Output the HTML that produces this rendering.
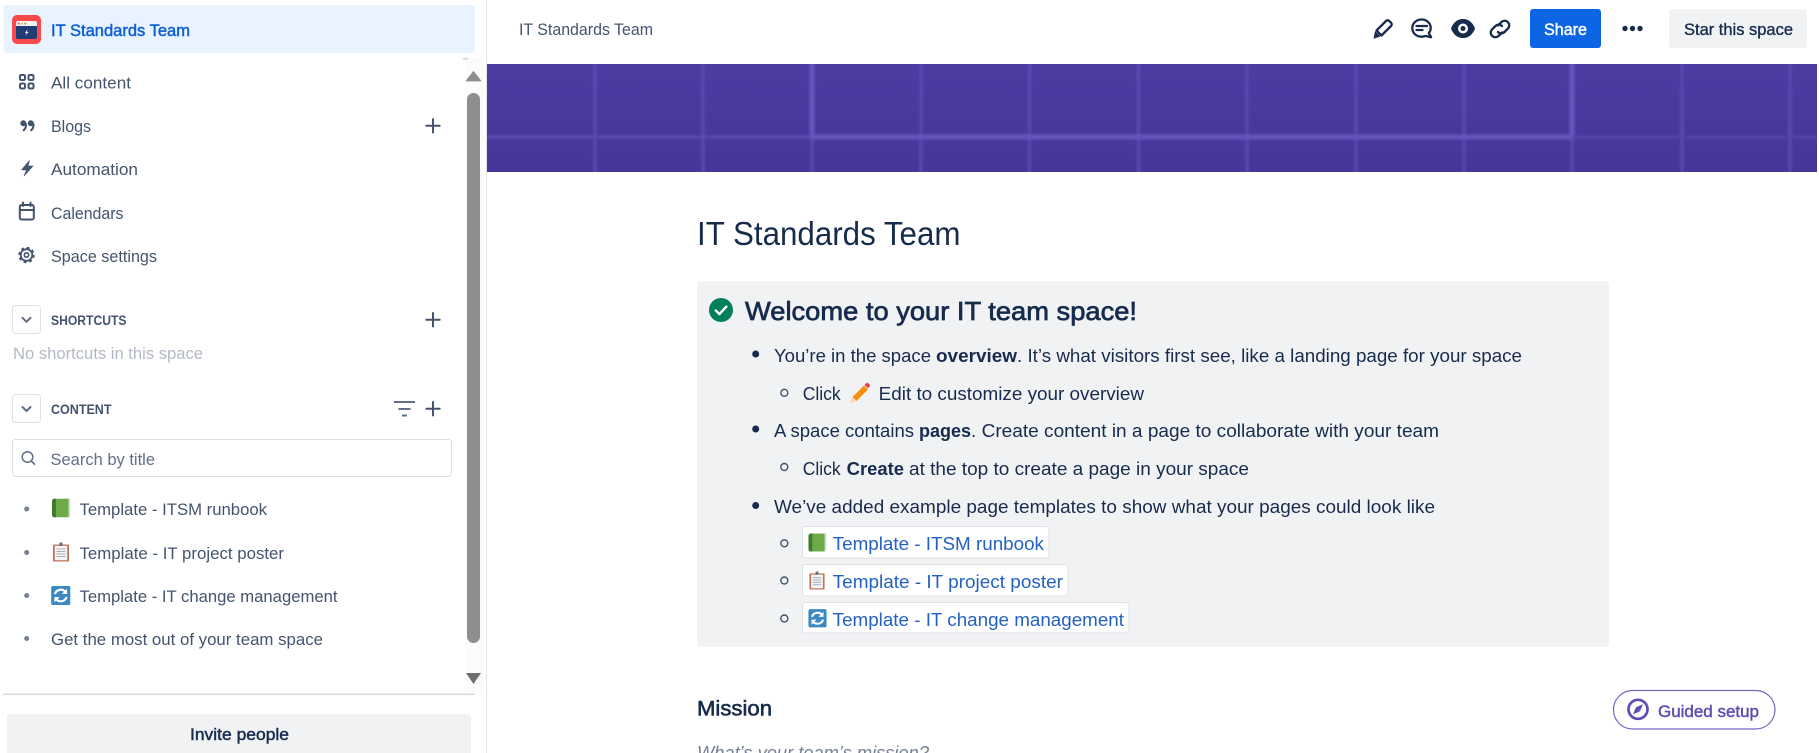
<!DOCTYPE html>
<html lang="en">
<head>
<meta charset="utf-8">
<title>IT Standards Team</title>
<style>
html,body{margin:0;padding:0;background:#fff;width:1819px;height:753px;overflow:hidden}
svg{display:block;position:absolute;left:0;top:0}
text{font-family:"Liberation Sans","DejaVu Sans",sans-serif;white-space:pre}
.s{font-size:16.2px;fill:#44546f}
.p{font-size:18.3px;fill:#172b4d}
.b{font-weight:700}
.l{font-size:18.3px;fill:#2361c4}
.ic{fill:none;stroke:#44546f;stroke-width:2;stroke-linecap:round;stroke-linejoin:round}
.top{fill:none;stroke:#172b4d;stroke-width:2.3;stroke-linecap:round;stroke-linejoin:round}
</style>
</head>
<body>
<svg xmlns="http://www.w3.org/2000/svg" width="1819" height="753" viewBox="0 0 1819 753">
<defs>
<linearGradient id="bn" x1="0" y1="0" x2="0" y2="1"><stop offset="0" stop-color="#4c3ca1"/><stop offset="1" stop-color="#473699"/></linearGradient>
<filter id="bl" x="-20%" y="-20%" width="140%" height="140%"><feGaussianBlur stdDeviation="1.3"/></filter>
<symbol id="book" viewBox="0 0 20 20">
<path d="M3 0.5H19.5V17.5L18 19.5H3C1.5 19.5 0.5 18.5 0.5 17V3C0.5 1.500 1.500 .5 3 .5Z" fill="#d9ddd5"/>
<path d="M2.500 0.500H17.500V19.500H2.500Z" fill="#6cab47"/>
<path d="M0.500 3C0.500 1.500 1.500 0.500 3 0.500H4.500V19.500H3C1.500 19.500 0.500 18.500 0.500 17Z" fill="#3e7b2d"/>
</symbol>
<symbol id="clip" viewBox="0 0 20 20">
<rect x="2" y="2.500" width="16" height="17" rx="1" fill="#c4705b"/>
<rect x="3.800" y="3.800" width="12.400" height="14.400" fill="#f4f6f7"/>
<rect x="8.500" y="0.500" width="3" height="3.500" fill="#68717a"/>
<path d="M5.500 7H14.500M5.500 9.500H14.500M5.500 12H14.500M5.500 14.500H14.500" stroke="#a5adb5" stroke-width="1"/>
</symbol>
<symbol id="sync" viewBox="0 0 20 20">
<rect x="0.200" y="0.200" width="19.600" height="19.600" rx="2" fill="#3b88c3"/>
<path d="M4 8.500A6.300 6.300 0 0 1 15 6.500" fill="none" stroke="#fff" stroke-width="2.200"/>
<path d="M16.500 3V8.500H11Z" fill="#fff"/>
<path d="M16 11.500A6.300 6.300 0 0 1 5 13.500" fill="none" stroke="#fff" stroke-width="2.200"/>
<path d="M3.500 17V11.500H9Z" fill="#fff"/>
</symbol>
</defs>

<!-- sidebar -->
<rect x="465" y="58" width="18" height="636" fill="#fbfbfb"/>
<rect x="463" y="58" width="5" height="1.500" fill="#d5d5d5"/>
<rect x="486" y="0" width="1" height="753" fill="#e4e6ea"/>
<rect x="3.500" y="5" width="471.500" height="48" rx="4" fill="#e9f2ff"/>
<rect x="12" y="15" width="29" height="29" rx="5" fill="#f8494b"/>
<rect x="16" y="21" width="21" height="18" rx="2" fill="#1f3d72"/>
<path d="M16 26V23a2 2 0 0 1 2-2H35a2 2 0 0 1 2 2V26Z" fill="#f1f1f1"/>
<circle cx="18.800" cy="23.600" r="1" fill="#ea5a4f"/><circle cx="22" cy="23.600" r="1" fill="#e6b93d"/><circle cx="25.200" cy="23.600" r="1" fill="#6fb35c"/>
<path d="M27.500 29.500L25 33H26.500L25.500 35.500L28.500 32H27Z" fill="#fff"/>
<text x="51" y="36" font-size="16.2" fill="#0c5fd4" stroke="#0c5fd4" stroke-width="0.45" textLength="139" lengthAdjust="spacingAndGlyphs">IT Standards Team</text>

<!-- nav icons -->
<g class="ic">
<rect x="20" y="75" width="5" height="5" rx="1.300"/><rect x="28.500" y="75" width="5" height="5" rx="1.300"/>
<rect x="20" y="83.500" width="5" height="5" rx="1.300"/><rect x="28.500" y="83.500" width="5" height="5" rx="1.300"/>
<path d="M26 123.500V125c0 2.500-1.200 4.500-3 5.800" stroke-linecap="butt"/><path d="M33.500 123.500V125c0 2.500-1.200 4.500-3 5.800" stroke-linecap="butt"/>
<rect x="19.800" y="205" width="14" height="14.500" rx="1.800"/><path d="M20 210H34M23 202.500V206M30.500 202.500V206"/>
<circle cx="26.500" cy="255" r="2.200" stroke-width="1.600"/>
<circle cx="26.500" cy="255" r="5.800" stroke-width="1.800"/>
</g>
<circle cx="23.300" cy="123.200" r="3" fill="#44546f"/><circle cx="30.800" cy="123.200" r="3" fill="#44546f"/>
<path d="M29.500 160.500L21.500 170H26.500L24 176L33 166H28Z" fill="#44546f" stroke="#44546f" stroke-width="0.6" stroke-linejoin="round"/>
<circle cx="26.500" cy="255" r="7.300" fill="none" stroke="#44546f" stroke-width="1.800" stroke-dasharray="2.800 2.930"/>

<text class="s" x="51" y="88.500" textLength="80" lengthAdjust="spacingAndGlyphs">All content</text>
<text class="s" x="51" y="132" textLength="40" lengthAdjust="spacingAndGlyphs">Blogs</text>
<text class="s" x="51" y="175" textLength="87" lengthAdjust="spacingAndGlyphs">Automation</text>
<text class="s" x="51" y="219" textLength="72.500" lengthAdjust="spacingAndGlyphs">Calendars</text>
<text class="s" x="51" y="262" textLength="106" lengthAdjust="spacingAndGlyphs">Space settings</text>

<g fill="none" stroke="#44546f" stroke-width="2" stroke-linecap="round">
<path d="M433 119V132.500M426.300 125.700H439.700"/>
<path d="M433 313V326.500M426.300 319.700H439.700"/>
<path d="M433 402V415.500M426.300 408.700H439.700"/>
</g>

<!-- shortcuts -->
<rect x="12.500" y="305.500" width="28" height="28" rx="3" fill="#fff" stroke="#dfe1e6"/>
<path d="M22.500 317.800l4 4 4-4" fill="none" stroke="#626f86" stroke-width="2" stroke-linecap="round" stroke-linejoin="round"/>
<text x="51" y="325" font-size="13.500" font-weight="700" fill="#44546f" textLength="75.500" lengthAdjust="spacingAndGlyphs">SHORTCUTS</text>
<text x="13" y="359" font-size="16.200" fill="#b3b9c4" textLength="190" lengthAdjust="spacingAndGlyphs">No shortcuts in this space</text>

<!-- content -->
<rect x="12.500" y="394.500" width="28" height="28" rx="3" fill="#fff" stroke="#dfe1e6"/>
<path d="M22.500 407l4 4 4-4" fill="none" stroke="#626f86" stroke-width="2" stroke-linecap="round" stroke-linejoin="round"/>
<text x="51" y="414" font-size="13.500" font-weight="700" fill="#44546f" textLength="60.500" lengthAdjust="spacingAndGlyphs">CONTENT</text>
<path d="M394 402H415M398.500 409H410.500M402 415.500H407" fill="none" stroke="#626f86" stroke-width="2"/>
<rect x="12.500" y="439.500" width="439" height="37" rx="3" fill="#fff" stroke="#dcdfe4"/>
<circle cx="27.500" cy="457" r="5.300" fill="none" stroke="#626f86" stroke-width="1.500"/>
<path d="M31.500 461.200L34.500 464.200" stroke="#626f86" stroke-width="1.600" stroke-linecap="round"/>
<text x="50.500" y="465" font-size="16.200" fill="#626f86" textLength="104.500" lengthAdjust="spacingAndGlyphs">Search by title</text>

<g fill="#758195">
<circle cx="26.700" cy="509" r="2.500"/><circle cx="26.700" cy="552.500" r="2.500"/><circle cx="26.700" cy="595.500" r="2.500"/><circle cx="26.700" cy="638.500" r="2.500"/>
</g>
<use href="#book" x="51.500" y="498" width="19.500" height="20"/>
<use href="#clip" x="51" y="542" width="20" height="20"/>
<use href="#sync" x="51" y="585.500" width="19.500" height="20"/>
<text class="s" x="79.500" y="515" textLength="187.500" lengthAdjust="spacingAndGlyphs">Template - ITSM runbook</text>
<text class="s" x="79.500" y="559" textLength="204.500" lengthAdjust="spacingAndGlyphs">Template - IT project poster</text>
<text class="s" x="79.500" y="602" textLength="258" lengthAdjust="spacingAndGlyphs">Template - IT change management</text>
<text class="s" x="51" y="645" textLength="272" lengthAdjust="spacingAndGlyphs">Get the most out of your team space</text>

<!-- scrollbar -->
<path d="M473.500 71.500L481 81H466Z" fill="#8f8f8f" stroke="#8f8f8f" stroke-width="0.8" stroke-linejoin="round"/>
<rect x="467" y="93" width="13" height="550" rx="6.500" fill="#8e8e8e"/>
<path d="M466 673H481L473.500 684Z" fill="#6e6e6e"/>

<rect x="3" y="693.500" width="472" height="1.600" fill="#d8dadf"/>
<path d="M10 714H468a3 3 0 0 1 3 3V753H7V717a3 3 0 0 1 3-3Z" fill="#f1f2f4"/>
<text x="190" y="740" font-size="16.200" fill="#172b4d" stroke="#172b4d" stroke-width="0.45" textLength="99" lengthAdjust="spacingAndGlyphs">Invite people</text>

<!-- top bar -->
<text class="s" x="519" y="35" textLength="134" lengthAdjust="spacingAndGlyphs">IT Standards Team</text>
<g class="top">
<path d="M1376.500 30.500L1386 21a2.300 2.300 0 0 1 3.300 0L1391 22.700a2.300 2.300 0 0 1 0 3.300L1381.500 35.500Z"/>
<path d="M1421.500 19.500c5.200 0 9.200 3.700 9.200 8.400c0 2-.7 3.800-1.900 5.200l2.300 4.100l-5.400-1.300c-1.300.5-2.700.8-4.200.8c-5.200 0-9.200-3.800-9.200-8.600s4-8.600 9.200-8.600Z"/>
<path d="M1416.500 26H1427M1416.500 30H1422.500"/>
<path d="M1498 25.500l3.500-3.500a4.600 4.600 0 0 1 6.500 6.500l-3.500 3.500a4.600 4.600 0 0 1-6.500 0"/>
<path d="M1502 32.500l-3.500 3.500a4.600 4.600 0 0 1-6.500-6.500l3.500-3.500a4.600 4.600 0 0 1 6.500 0"/>
</g>
<path d="M1375 31L1380.500 36.500L1373.500 38.800Z" fill="#172b4d"/>
<path d="M1451 28.500C1453 23 1457 19 1463 19S1473 23 1475 28.500C1473 34 1469 38 1463 38S1453 34 1451 28.500Z" fill="#172b4d"/>
<circle cx="1463" cy="28.500" r="5" fill="#fff"/><circle cx="1463" cy="28.500" r="2.500" fill="#172b4d"/>

<rect x="1530" y="9" width="71" height="39" rx="3" fill="#0c66e4"/>
<text x="1544" y="35" font-size="16.200" fill="#fff" stroke="#fff" stroke-width="0.45" textLength="43" lengthAdjust="spacingAndGlyphs">Share</text>
<g fill="#172b4d"><circle cx="1625" cy="28.500" r="2.700"/><circle cx="1632.500" cy="28.500" r="2.700"/><circle cx="1640" cy="28.500" r="2.700"/></g>
<rect x="1669" y="9" width="138" height="39" rx="3" fill="#f1f2f4"/>
<text x="1684" y="35" font-size="16.200" fill="#172b4d" stroke="#172b4d" stroke-width="0.35" textLength="109" lengthAdjust="spacingAndGlyphs">Star this space</text>

<!-- banner -->
<svg x="487" y="64" width="1330" height="108" viewBox="487 64 1330 108">
<rect x="487" y="64" width="1330" height="108" fill="url(#bn)"/>
<g filter="url(#bl)">
<g fill="#5a4cb2">
<rect x="593.500" y="60" width="3" height="116"/><rect x="701.500" y="60" width="3" height="116"/>
<rect x="919.500" y="60" width="3" height="116"/><rect x="1028" y="60" width="3" height="116"/>
<rect x="1137" y="60" width="3" height="116"/><rect x="1245.500" y="60" width="3" height="116"/>
<rect x="1354.500" y="60" width="3" height="116"/><rect x="1462.500" y="60" width="3" height="116"/>
<rect x="1680.500" y="60" width="3" height="116"/><rect x="1788.500" y="60" width="3" height="116"/>
</g>
<rect x="809.500" y="60" width="5" height="78" fill="#6659c0"/>
<rect x="810.500" y="136" width="3" height="40" fill="#5a4cb2"/>
<rect x="1569.500" y="60" width="5" height="78" fill="#6659c0"/>
<rect x="1570.500" y="136" width="3" height="40" fill="#5a4cb2"/>
<rect x="483" y="135.500" width="330" height="3" fill="#5a4cb2"/>
<rect x="810" y="134.500" width="764" height="5" fill="#6456bc"/>
<rect x="1572" y="136" width="250" height="2.500" fill="#5546ad"/>
</g>
</svg>

<!-- page -->
<text x="697" y="245" font-size="33" fill="#172b4d" textLength="263.500" lengthAdjust="spacingAndGlyphs">IT Standards Team</text>
<rect x="697" y="281" width="912" height="366" rx="3" fill="#f1f2f4"/>
<circle cx="721" cy="310" r="12" fill="#00805a"/>
<path d="M715.800 310.500l3.600 3.600l7-7.500" fill="none" stroke="#fff" stroke-width="2.400" stroke-linecap="round" stroke-linejoin="round"/>
<text x="745" y="320" font-size="26" fill="#172b4d" stroke="#172b4d" stroke-width="0.7" textLength="392" lengthAdjust="spacingAndGlyphs">Welcome to your IT team space!</text>

<g fill="#172b4d"><circle cx="755.700" cy="354" r="3.500"/><circle cx="755.700" cy="429" r="3.500"/><circle cx="755.700" cy="505.500" r="3.500"/></g>
<g fill="none" stroke="#44546f" stroke-width="1.400">
<circle cx="784.300" cy="392.800" r="3.500"/><circle cx="784.300" cy="467" r="3.500"/>
<circle cx="784.300" cy="543.300" r="3.500"/><circle cx="784.300" cy="580.500" r="3.500"/><circle cx="784.300" cy="618.500" r="3.500"/>
</g>

<text class="p" x="774" y="362" textLength="157" lengthAdjust="spacingAndGlyphs">You’re in the space</text>
<text class="p b" x="936" y="362" textLength="81" lengthAdjust="spacingAndGlyphs">overview</text>
<text class="p" x="1017" y="362" textLength="505" lengthAdjust="spacingAndGlyphs">. It’s what visitors first see, like a landing page for your space</text>

<text class="p" x="802.700" y="400" textLength="38" lengthAdjust="spacingAndGlyphs">Click</text>
<g>
<path d="M852.500 397L864 385.500L868 389.500L856.500 401Z" fill="#f4900c"/>
<path d="M864.500 385l1.800-1.800a1.500 1.500 0 0 1 2 0l1.300 1.300a1.500 1.500 0 0 1 0 2l-1.800 1.800Z" fill="#ea3a5e"/>
<path d="M852.500 397L856.500 401L849.500 403.500Z" fill="#fbd5a5"/>
</g>
<text class="p" x="878.700" y="400" textLength="265.300" lengthAdjust="spacingAndGlyphs">Edit to customize your overview</text>

<text class="p" x="774" y="437" textLength="140" lengthAdjust="spacingAndGlyphs">A space contains</text>
<text class="p b" x="919" y="437" textLength="52" lengthAdjust="spacingAndGlyphs">pages</text>
<text class="p" x="971" y="437" textLength="468" lengthAdjust="spacingAndGlyphs">. Create content in a page to collaborate with your team</text>

<text class="p" x="802.700" y="475" textLength="38" lengthAdjust="spacingAndGlyphs">Click</text>
<text class="p b" x="846.700" y="475" textLength="57.300" lengthAdjust="spacingAndGlyphs">Create</text>
<text class="p" x="909" y="475" textLength="340" lengthAdjust="spacingAndGlyphs">at the top to create a page in your space</text>

<text class="p" x="774" y="513" textLength="661" lengthAdjust="spacingAndGlyphs">We’ve added example page templates to show what your pages could look like</text>

<g fill="#fff" stroke="#dfe1e6">
<rect x="802.500" y="526.500" width="246.500" height="31.500" rx="3"/>
<rect x="802.500" y="564.500" width="265.500" height="31.500" rx="3"/>
<rect x="802.500" y="602.500" width="326.500" height="30.500" rx="3"/>
</g>
<use href="#book" x="808" y="533" width="19" height="19"/>
<use href="#clip" x="807.500" y="571" width="19" height="19"/>
<use href="#sync" x="808" y="609" width="19" height="18.500"/>
<text class="l" x="832.700" y="550" textLength="211.300" lengthAdjust="spacingAndGlyphs">Template - ITSM runbook</text>
<text class="l" x="832.700" y="588" textLength="230.300" lengthAdjust="spacingAndGlyphs">Template - IT project poster</text>
<text class="l" x="832.700" y="626" textLength="291.300" lengthAdjust="spacingAndGlyphs">Template - IT change management</text>

<text x="697" y="715.500" font-size="21" fill="#172b4d" stroke="#172b4d" stroke-width="0.6" textLength="75" lengthAdjust="spacingAndGlyphs">Mission</text>
<text x="697" y="759" font-size="18.300" font-style="italic" fill="#758195" textLength="232" lengthAdjust="spacingAndGlyphs">What’s your team’s mission?</text>

<!-- guided setup -->
<rect x="1613.500" y="690.500" width="161.500" height="38.500" rx="19.200" fill="#fff" stroke="#7566c4" stroke-width="1.200"/>
<circle cx="1638" cy="709.300" r="9.500" fill="none" stroke="#5e4db2" stroke-width="2.700"/>
<path d="M1643 704.300L1640 711.300L1633 714.300L1636 707.300Z" fill="#5e4db2"/>
<text x="1658" y="717" font-size="16.200" fill="#5e4db2" stroke="#5e4db2" stroke-width="0.45" textLength="101" lengthAdjust="spacingAndGlyphs">Guided setup</text>
</svg>
</body>
</html>
